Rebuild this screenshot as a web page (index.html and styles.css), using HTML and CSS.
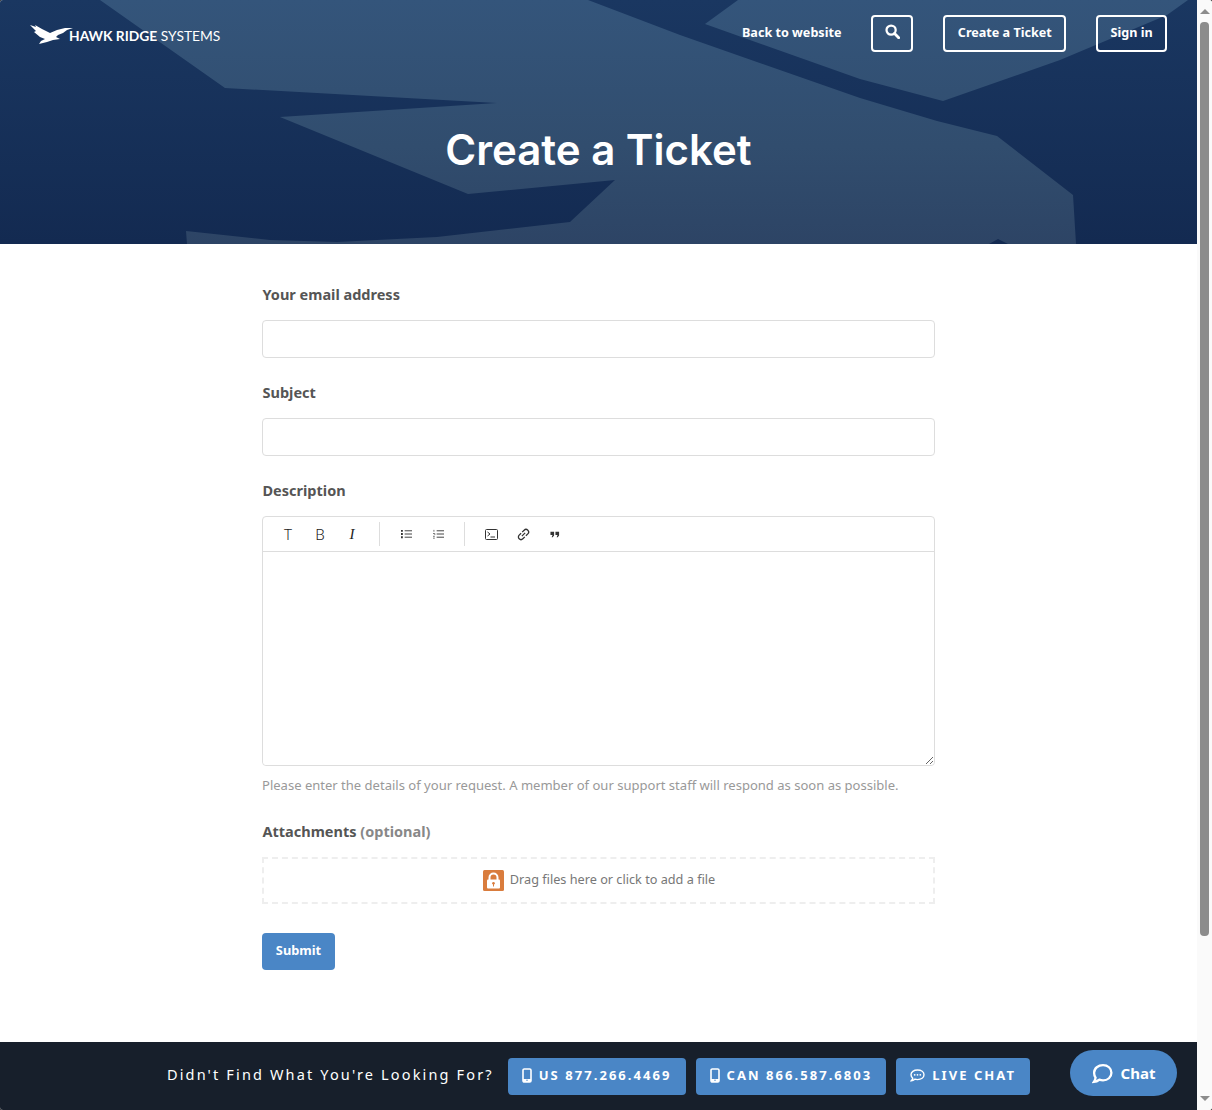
FILE: index.html
```html
<!DOCTYPE html>
<html lang="en">
<head>
    <meta charset="UTF-8">
    <meta name="viewport" content="width=device-width, initial-scale=1.0">
    <title>Create a Ticket</title>
    <link rel="stylesheet" href="styles.css">
</head>
<body>
    <div class="shell">
        <div class="page">
            <section class="hero">
                <svg class="hero-art" viewBox="0 0 1197 244" width="1197" height="244" aria-hidden="true">
                    <defs>
                        <linearGradient id="hero-light" gradientUnits="userSpaceOnUse" x1="0" y1="0" x2="0" y2="244">
                            <stop offset="0" stop-color="#34557b"/>
                            <stop offset="0.6" stop-color="#314d6e"/>
                            <stop offset="1" stop-color="#2d4465"/>
                        </linearGradient>
                    </defs>
                    <polygon fill="url(#hero-light)" points="100,0 588,0 680,35 860,98 937,121 997,136 1073,195 1076,244 1008,244 998,239 989,244 187,244 186,231 270,240 337,242 437,237 570,222 615,180 468,194 280,117 497,103 225,88"/>
                    <polygon fill="url(#hero-light)" points="738,0 705,24 860,79 943,101 1060,60 1167,15 1188,0"/>
                </svg>
                <header class="header">
                    <a class="logo" href="#">
                        <svg class="logo-bird" viewBox="0 0 44 22" width="44" height="22" aria-hidden="true">
                            <path d="M0 1 L6 3 L5 1 L12 5 L20 9 L27 6 L35 4 L43 4 L37 6 L33 9 L28 11 L26 13 L30 15 L23 16 L17 18 L9 20 L11 17 L15 15 L10 13 L4 8 L6 7 Z"/>
                        </svg>
                        <span class="logo-text"><b>HAWK RIDGE</b> SYSTEMS</span>
                    </a>
                    <nav class="nav">
                        <a class="nav-link" href="#">Back to website</a>
                        <a class="nav-button nav-search" href="#" aria-label="Search">
                            <svg viewBox="0 0 16 16" width="15" height="15" aria-hidden="true">
                                <circle cx="6.5" cy="6.5" r="4.9" fill="none" stroke="#fff" stroke-width="2.4"/>
                                <path d="M10.2 10.2 L14.6 14.6" stroke="#fff" stroke-width="3" stroke-linecap="round"/>
                            </svg>
                        </a>
                        <a class="nav-button" href="#">Create a Ticket</a>
                        <a class="nav-button" href="#">Sign in</a>
                    </nav>
                </header>
                <h1 class="hero-title">Create a Ticket</h1>
            </section>

            <main class="main">
                <form class="ticket-form">
                    <label class="field-label" for="email">Your email address</label>
                    <input class="field-input" id="email" type="text">

                    <label class="field-label" for="subject">Subject</label>
                    <input class="field-input" id="subject" type="text">

                    <label class="field-label" for="description">Description</label>
                    <div class="editor">
                        <div class="toolbar">
                            <div class="tool-group">
                                <span class="tool tool-text">T</span>
                                <span class="tool tool-text">B</span>
                                <span class="tool tool-text tool-italic">I</span>
                            </div>
                            <div class="tool-group">
                                <span class="tool">
                                    <svg viewBox="0 0 12 10" width="11" height="10" aria-hidden="true">
                                        <path d="M4 1.5 H12 M4 5 H12 M4 8.5 H12" stroke="#333" stroke-width="1"/>
                                        <path d="M0 .5 H2 V2.5 H0 Z M0 4 H2 V6 H0 Z M0 7.5 H2 V9.500 H0 Z" fill="#333"/>
                                    </svg>
                                </span>
                                <span class="tool">
                                    <svg viewBox="0 0 12 10" width="11" height="10" aria-hidden="true">
                                        <path d="M4 1.5 H12 M4 5 H12 M4 8.5 H12" stroke="#333" stroke-width="1"/>
                                        <path d="M1 .5 V2.500 M0 4.500 H2 V6 M0 7.500 H2 M0 9.500 H2" stroke="#666" stroke-width="1" fill="none"/>
                                    </svg>
                                </span>
                            </div>
                            <div class="tool-group">
                                <span class="tool">
                                    <svg viewBox="0 0 13 11" width="13" height="11" aria-hidden="true">
                                        <rect x=".5" y=".5" width="12" height="10" rx="1" fill="none" stroke="#333"/>
                                        <path d="M2.500 3 L5 5 L2.500 7 M5.500 8 H10" fill="none" stroke="#333"/>
                                    </svg>
                                </span>
                                <span class="tool">
                                    <svg viewBox="0 0 12 12" width="13" height="13" aria-hidden="true">
                                        <path d="M4.500 7.500 L7.500 4.500 M4.800 3.800 L6.600 2 A2.400 2.400 0 0 1 10 5.400 L8.200 7.200 M7.200 8.200 L5.400 10 A2.400 2.400 0 0 1 2 6.600 L3.800 4.800" fill="none" stroke="#333" stroke-width="1.200"/>
                                    </svg>
                                </span>
                                <span class="tool">
                                    <svg viewBox="0 0 11 7" width="10" height="7" aria-hidden="true">
                                        <path d="M.5 .5 H4.500 V4.500 L3 6.500 H1.800 L2.800 4 H.5 Z M6 .5 H10 V4.500 L8.500 6.500 H7.300 L8.300 4 H6 Z" fill="#333"/>
                                    </svg>
                                </span>
                            </div>
                        </div>
                        <textarea class="editor-area" id="description"></textarea>
                    </div>
                    <p class="field-hint">Please enter the details of your request. A member of our support staff will respond as soon as possible.</p>

                    <div class="field-label attach-label">Attachments <span class="optional">(optional)</span></div>
                    <div class="dropzone">
                        <svg class="drop-icon" viewBox="0 0 21 21" width="21" height="21" aria-hidden="true">
                            <rect width="21" height="21" rx="1.500" fill="#d97c3d"/>
                            <path d="M6.500 10 V7.500 A4 4 0 0 1 14.500 7.500 V10" fill="none" stroke="#fff" stroke-width="2"/>
                            <rect x="4" y="9.500" width="13" height="9" rx="1" fill="#fff"/>
                            <circle cx="10.500" cy="13.300" r="1.300" fill="#d97c3d"/>
                            <rect x="10" y="13.500" width="1" height="3" fill="#d97c3d"/>
                        </svg>
                        <span class="drop-text">Drag files here or click to add a file</span>
                    </div>

                    <button class="submit-button" type="button">Submit</button>
                </form>
            </main>

            <footer class="footer">
                <span class="footer-text">Didn't Find What You're Looking For?</span>
                <a class="footer-button" href="#">
                    <svg viewBox="0 0 10 15" width="10" height="15" aria-hidden="true">
                        <rect x="1" y="1" width="8" height="13" rx="1.300" fill="none" stroke="#fff" stroke-width="1.600"/>
                        <path d="M1 11 H9 V13 A1 1 0 0 1 8 14 H2 A1 1 0 0 1 1 13 Z" fill="#fff"/>
                        <circle cx="5" cy="12.300" r=".7" fill="#4a86c6"/>
                    </svg>
                    US 877.266.4469
                </a>
                <a class="footer-button" href="#">
                    <svg viewBox="0 0 10 15" width="10" height="15" aria-hidden="true">
                        <rect x="1" y="1" width="8" height="13" rx="1.300" fill="none" stroke="#fff" stroke-width="1.600"/>
                        <path d="M1 11 H9 V13 A1 1 0 0 1 8 14 H2 A1 1 0 0 1 1 13 Z" fill="#fff"/>
                        <circle cx="5" cy="12.300" r=".7" fill="#4a86c6"/>
                    </svg>
                    CAN 866.587.6803
                </a>
                <a class="footer-button" href="#">
                    <svg viewBox="0 0 15 13" width="15" height="13" aria-hidden="true">
                        <path d="M7.500 1 C11.200 1 14 3 14 5.800 C14 8.600 11.200 10.600 7.500 10.600 C6.500 10.600 5.600 10.500 4.800 10.200 C4 11 2.800 11.800 1.300 11.800 C2.200 11 2.700 10 2.800 9.200 C1.700 8.300 1 7.100 1 5.800 C1 3 3.800 1 7.500 1 Z" fill="none" stroke="#fff" stroke-width="1.400"/>
                        <circle cx="4.700" cy="5.800" r=".9" fill="#fff"/>
                        <circle cx="7.500" cy="5.800" r=".9" fill="#fff"/>
                        <circle cx="10.300" cy="5.800" r=".9" fill="#fff"/>
                    </svg>
                    LIVE CHAT
                </a>
            </footer>

            <a class="chat-widget" href="#">
                <svg viewBox="0 0 20 20" width="21" height="21" aria-hidden="true">
                    <path d="M10.500 2 C15 2 18.500 5 18.500 9.300 C18.500 13.500 15 16.600 10.500 16.600 C9.200 16.600 8 16.300 7 15.900 C5.500 17 3.700 17.800 1.800 18 C2.700 16.800 3.200 15.600 3.400 14 C2.400 12.700 2 11.100 2 9.300 C2 5 6 2 10.500 2 Z" fill="none" stroke="#fff" stroke-width="2.200"/>
                </svg>
                Chat
            </a>
        </div>

        <aside class="scrollbar" aria-hidden="true">
            <span class="scroll-arrow scroll-up"></span>
            <span class="scroll-thumb"></span>
            <span class="scroll-arrow scroll-down"></span>
        </aside>
    </div>
</body>
</html>
```
FILE: styles.css
```css
* {
    box-sizing: border-box;
}

html, body {
    height: 100%;
}

body {
    margin: 0;
    overflow: hidden;
    font-family: "Noto Sans", Arial, sans-serif;
    color: #555;
    background-color: #333;
}

a {
    color: inherit;
    text-decoration: none;
}

.shell {
    display: flex;
    height: 100vh;
    overflow: hidden;
    border-radius: 3px;
    background-color: #fff;
}

.page {
    position: relative;
    flex: 1;
    display: flex;
    flex-direction: column;
    min-width: 0;
}

/* hero */
.hero {
    position: relative;
    height: 244px;
    flex-shrink: 0;
    overflow: hidden;
    color: #fff;
    background: linear-gradient(#1a3761, #132a51);
}

.hero-art {
    position: absolute;
    top: 0;
    left: 0;
}

.header {
    position: relative;
    display: flex;
    justify-content: space-between;
    padding: 15px 30px 0;
}

.logo {
    display: flex;
    align-items: flex-end;
    height: 30px;
}

.logo-bird {
    fill: #fff;
    flex-shrink: 0;
    margin-right: -5px;
    margin-bottom: -1px;
}

.logo-text {
    font-family: Lato, sans-serif;
    font-size: 13.8px;
    font-weight: 400;
    line-height: 18px;
    white-space: nowrap;
}

.logo-text b {
    font-weight: 700;
}

.nav {
    display: flex;
    align-items: flex-start;
    gap: 30px;
    font-size: 12.6px;
    font-weight: 700;
}

.nav-link {
    line-height: 35px;
}

.nav-button {
    display: flex;
    align-items: center;
    justify-content: center;
    height: 37px;
    padding: 0 12.4px 3px;
    border: 2px solid #fff;
    border-radius: 4px;
}

.nav-search {
    width: 42px;
    padding: 0 0 5px;
}

.hero-title {
    position: relative;
    margin: 70px 0 0;
    text-align: center;
    font-family: Inter, sans-serif;
    font-size: 42px;
    font-weight: 600;
    line-height: 56px;
}

/* form */
.main {
    flex: 1;
    padding-top: 41px;
}

.ticket-form {
    width: 673px;
    margin-left: 262px;
}

.field-label {
    display: block;
    margin-bottom: 17px;
    padding-left: 0.5px;
    font-size: 14.5px;
    font-weight: 700;
    line-height: 18px;
}

.field-input {
    display: block;
    width: 100%;
    height: 38px;
    margin-bottom: 25px;
    border: 1px solid #ddd;
    border-radius: 4px;
    background-color: #fff;
}

.editor {
    border: 1px solid #ddd;
    border-radius: 4px;
}

.toolbar {
    display: flex;
    align-items: center;
    height: 35px;
    padding: 0 9px;
    border-bottom: 1px solid #ddd;
}

.tool-group {
    display: flex;
    align-items: center;
    height: 24px;
    padding-right: 11px;
    margin-right: 10px;
    border-right: 1px solid #ddd;
}

.tool-group + .tool-group {
    padding-right: 10px;
}

.tool-group:last-child {
    border-right: none;
}

.tool {
    display: flex;
    align-items: center;
    justify-content: center;
    width: 32px;
    height: 24px;
}

.tool-text {
    font-size: 15px;
    font-weight: 300;
    color: #222;
}

.tool-italic {
    font-family: "Liberation Serif", serif;
    font-style: italic;
    font-size: 15px;
}

.editor-area {
    display: block;
    width: 100%;
    height: 213px;
    border: none;
    outline: none;
    resize: vertical;
    border-radius: 0 0 4px 4px;
}

.field-hint {
    margin: 9px 0 27px;
    font-size: 13.04px;
    line-height: 20px;
    color: #999;
}

.optional {
    color: #888;
}

.dropzone {
    display: flex;
    align-items: center;
    justify-content: center;
    gap: 6px;
    height: 47px;
    padding-bottom: 1px;
    border: 2px dashed #eee;
    font-size: 12.7px;
    color: #777;
}

.drop-icon {
    margin-left: 1px;
}

.drop-text {
    padding-bottom: 2px;
}

.submit-button {
    display: block;
    width: 73px;
    height: 37px;
    margin-top: 29px;
    padding: 0 0 3px;
    border: none;
    border-radius: 4px;
    background-color: #4a86c6;
    color: #fff;
    font-family: inherit;
    font-size: 12.8px;
    font-weight: 700;
}

/* footer */
.footer {
    display: flex;
    align-items: center;
    justify-content: center;
    gap: 10px;
    height: 68px;
    flex-shrink: 0;
    background-color: #171f2b;
    color: #fff;
}

.footer-text {
    margin-right: 4px;
    padding-bottom: 4px;
    font-size: 14.5px;
    letter-spacing: 2.15px;
    white-space: nowrap;
}

.footer-button {
    display: flex;
    align-items: center;
    gap: 7px;
    height: 37px;
    padding: 0 14px 2px;
    border-radius: 4px;
    background-color: #4a86c6;
    font-size: 13px;
    font-weight: 700;
    letter-spacing: 2.05px;
    white-space: nowrap;
}

.chat-widget {
    position: absolute;
    right: 20px;
    bottom: 14px;
    display: flex;
    align-items: center;
    gap: 8px;
    height: 46px;
    padding: 0 21.5px;
    border-radius: 23px;
    background-color: #4a86c6;
    color: #fff;
    font-size: 15px;
    font-weight: 700;
}

/* drawn scrollbar */
.scrollbar {
    display: flex;
    flex-direction: column;
    align-items: center;
    width: 15px;
    flex-shrink: 0;
    padding: 9px 0 9px;
    background-color: #fafafa;
}

.scroll-arrow {
    width: 0;
    height: 0;
    border-left: 5px solid transparent;
    border-right: 5px solid transparent;
}

.scroll-up {
    border-bottom: 5px solid #8c8c8c;
}

.scroll-down {
    margin-top: auto;
    border-top: 5px solid #8c8c8c;
}

.scroll-thumb {
    width: 9px;
    height: 914px;
    margin-top: 8px;
    border-radius: 4px;
    background-color: #8c8c8c;
}
```
